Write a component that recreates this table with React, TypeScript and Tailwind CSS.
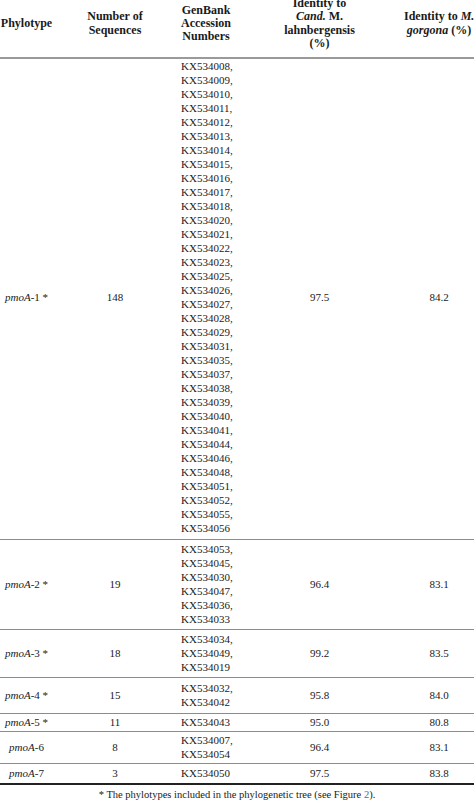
import React from 'react';

type Row = {
  name: string;
  star: boolean;
  count: string;
  accessions: string[];
  cand: string;
  gorgona: string;
  pad: string;
};

const rows: Row[] = [
  {
    name: '1',
    star: true,
    count: '148',
    accessions: [
      'KX534008', 'KX534009', 'KX534010', 'KX534011', 'KX534012', 'KX534013',
      'KX534014', 'KX534015', 'KX534016', 'KX534017', 'KX534018', 'KX534020',
      'KX534021', 'KX534022', 'KX534023', 'KX534025', 'KX534026', 'KX534027',
      'KX534028', 'KX534029', 'KX534031', 'KX534035', 'KX534037', 'KX534038',
      'KX534039', 'KX534040', 'KX534041', 'KX534044', 'KX534046', 'KX534048',
      'KX534051', 'KX534052', 'KX534055', 'KX534056',
    ],
    cand: '97.5',
    gorgona: '84.2',
    pad: 'pt-0 pb-[4px]',
  },
  {
    name: '2',
    star: true,
    count: '19',
    accessions: ['KX534053', 'KX534045', 'KX534030', 'KX534047', 'KX534036', 'KX534033'],
    cand: '96.4',
    gorgona: '83.1',
    pad: 'pt-[2px] pb-[3px]',
  },
  {
    name: '3',
    star: true,
    count: '18',
    accessions: ['KX534034', 'KX534049', 'KX534019'],
    cand: '99.2',
    gorgona: '83.5',
    pad: 'pt-[2px] pb-[3px]',
  },
  {
    name: '4',
    star: true,
    count: '15',
    accessions: ['KX534032', 'KX534042'],
    cand: '95.8',
    gorgona: '84.0',
    pad: 'pt-[3px] pb-[4px]',
  },
  {
    name: '5',
    star: true,
    count: '11',
    accessions: ['KX534043'],
    cand: '95.0',
    gorgona: '80.8',
    pad: 'pt-[1px] pb-[2px]',
  },
  {
    name: '6',
    star: false,
    count: '8',
    accessions: ['KX534007', 'KX534054'],
    cand: '96.4',
    gorgona: '83.1',
    pad: 'pt-[1px] pb-[2px]',
  },
  {
    name: '7',
    star: false,
    count: '3',
    accessions: ['KX534050'],
    cand: '97.5',
    gorgona: '83.8',
    pad: 'pt-[2px] pb-[3px]',
  },
];

const cols = 'grid grid-cols-[53px_124px_58px_169px_70px] items-center';

export default function App() {
  return (
    <div
      className="w-[474px] h-[801px] overflow-hidden bg-white text-[#1a1a1a]"
      style={{ fontFamily: '"Liberation Serif", "Times New Roman", serif' }}
    >
      {/* Header */}
      <div className={`${cols} mt-[-3px] pb-[7px] border-b-2 border-[#9a9a9a] text-[12px] leading-[13.3px] font-bold text-center`}>
        <div>Phylotype</div>
        <div>
          Number of
          <br />
          Sequences
        </div>
        <div>
          GenBank
          <br />
          Accession
          <br />
          Numbers
        </div>
        <div>
          Identity to
          <br />
          <i>Cand.</i> M.
          <br />
          lahnbergensis
          <br />
          (%)
        </div>
        <div className="whitespace-nowrap">
          Identity to <i>M.</i>
          <br />
          <i>gorgona</i> (%)
        </div>
      </div>

      {/* Body */}
      {rows.map((r, i) => (
        <div
          key={r.name}
          className={`${cols} ${r.pad} text-[11px] leading-[14px] text-center ${
            i === rows.length - 1 ? 'border-b-2 border-[#222]' : 'border-b border-[#8c8c8c]'
          }`}
        >
          <div className="whitespace-nowrap">
            <i>pmoA</i>-{r.name}
            {r.star ? ' *' : ''}
          </div>
          <div>{r.count}</div>
          <div className="text-left pl-[4px] whitespace-nowrap">
            {r.accessions.map((a, j) => (
              <div key={a}>
                {a}
                {j < r.accessions.length - 1 ? ',' : ''}
              </div>
            ))}
          </div>
          <div>{r.cand}</div>
          <div>{r.gorgona}</div>
        </div>
      ))}

      {/* Footnote */}
      <p className="pt-[3px] text-center text-[10.5px] leading-[13.3px]">
        * The phylotypes included in the phylogenetic tree (see Figure <span className="text-[#3b6fb6]">2</span>).
      </p>
    </div>
  );
}
